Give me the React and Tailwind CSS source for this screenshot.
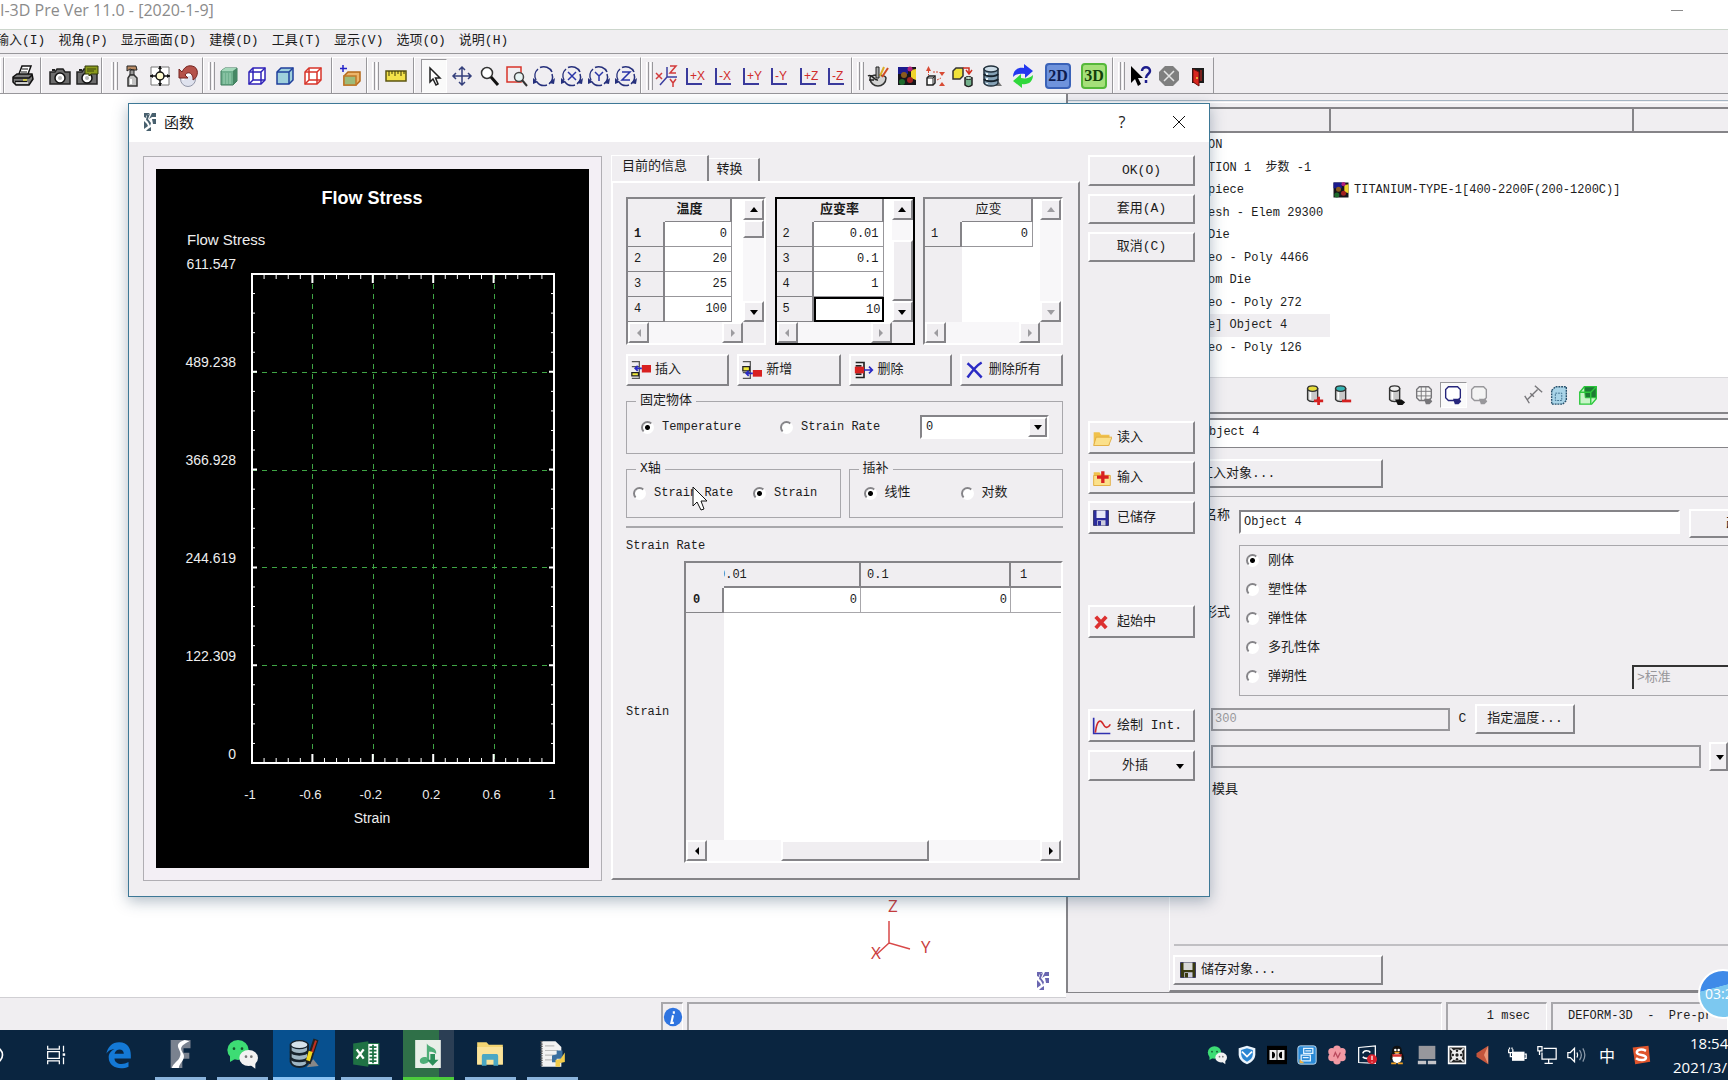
import { useState } from "react";

const raised = "border-2 border-t-white border-l-white border-r-[#858488] border-b-[#858488] bg-[#f0eef1]";
const sunken = "border-2 border-t-[#858488] border-l-[#858488] border-r-white border-b-white";
const mono = "font-['Liberation_Mono','Noto_Sans_CJK_SC',monospace]";

function Svg({ size = "size-6", box = "0 0 24 24", children }) {
  return (
    <svg className={`${size} shrink-0`} viewBox={box} fill="none" aria-hidden="true">
      {children}
    </svg>
  );
}

/* ---------- toolbar icons ---------- */

function Printer() {
  return (
    <Svg>
      <path d="M8 10L11 2H20L17 10" fill="#fff" stroke="#111" strokeWidth="1.5" />
      <path d="M11 5H17M10 8H16" stroke="#111" />
      <path d="M2 13L6 10H21L22 15L18 21H5L2 18Z" fill="#777" stroke="#111" strokeWidth="1.5" />
      <path d="M2 14H18L21 11M4 17.500H16" stroke="#111" strokeWidth="1.500" />
      <path d="M5 19H17" stroke="#eee" strokeWidth="1.500" />
      <path d="M12 16H16" stroke="#e8e03a" strokeWidth="1.500" />
    </Svg>
  );
}

function Camera({ tag }) {
  return (
    <Svg>
      <path d="M2 8H7L9 5H15L17 8H22V20H2Z" fill="#6d6d6d" stroke="#222" strokeWidth="1.500" />
      <path d="M4 5H7V7H4Z" fill="#222" />
      <circle cx="12" cy="14" r="5" fill="#fff" stroke="#111" strokeWidth="1.500" />
      <circle cx="12" cy="14" r="2" fill="#bbb" />
      {tag && <path d="M10 2H23V10H16L14 12V10H10Z" fill="#8a9a1c" stroke="#303808" />}
      {tag && <path d="M12 5H21M12 7H19" stroke="#3a4408" />}
    </Svg>
  );
}

function Spray() {
  return (
    <Svg>
      <path d="M7 2H16L17 6H13L10 5L7 7Z" fill="#b98a63" stroke="#222" />
      <path d="M10 6H14V11H10Z" fill="#999" stroke="#222" />
      <path d="M10 11L8 14V22H17V14L14 11Z" fill="#c4c4c4" stroke="#333" strokeWidth="1.500" />
      <path d="M11 15V20" stroke="#fff" strokeWidth="2" />
    </Svg>
  );
}

function Target() {
  return (
    <Svg>
      <path d="M3 3H21V21H3Z" fill="#fff" stroke="#777" />
      <circle cx="12" cy="12" r="4" fill="#fffbd0" stroke="#111" strokeWidth="1.500" />
      <path d="M12 2V8M12 16V22M2 12H8M16 12H22" stroke="#111" strokeWidth="1.500" />
      <path d="M10 5H14L12 2ZM10 19H14L12 22ZM5 10V14L2 12ZM19 10V14L22 12Z" fill="#111" />
    </Svg>
  );
}

function Undo() {
  return (
    <Svg>
      <circle cx="12" cy="15" r="7.500" fill="#dfe2ee" stroke="#9397a8" />
      <path d="M7 16C8 12 12 10 16 11" stroke="#fff" strokeWidth="2" />
      <path d="M3 5V14H12L9 11C11 8 14 8 16 11C17 13 17 14 17 16C23 13 23 3 16 2C11 1 8 4 6 8Z" fill="#b5524a" stroke="#742420" />
    </Svg>
  );
}

function Cube({ line, front, wire }) {
  return (
    <Svg>
      <path d="M4 8L8 4H20V16L16 20H4Z" fill={front} stroke={line} strokeWidth="1.500" />
      <path d="M4 8H16V20M16 8L20 4" stroke={line} strokeWidth="1.500" />
      {wire && <path d="M8 4V16H20M8 16L4 20" stroke={line} strokeWidth="1.500" />}
    </Svg>
  );
}

function SolidCube() {
  return (
    <Svg>
      <path d="M4 7L8 4H20V17L16 21H4Z" fill="#6fb08e" stroke="#3d7a5a" />
      <path d="M4 7H16L20 4H8Z" fill="#a5d8bb" />
      <path d="M16 7V21L20 17V4Z" fill="#468765" />
      <path d="M7 9V20M10 9V20M13 9V20" stroke="#9fd3b5" />
    </Svg>
  );
}

function BoxPlus() {
  return (
    <Svg>
      <path d="M6 12L10 8H22V17L18 21H6Z" fill="#ecb46a" stroke="#b46818" strokeWidth="1.500" />
      <path d="M6 12H18V21H6Z" fill="#9dbb7a" stroke="#c07a28" strokeWidth="1.500" />
      <path d="M5 1V8M2 4.500H9" stroke="#2222c8" strokeWidth="1.500" />
    </Svg>
  );
}

function Ruler() {
  return (
    <Svg>
      <path d="M2 7H22V17H2Z" fill="#f4e24a" stroke="#5c5510" strokeWidth="1.500" />
      <path d="M5 7V12M8 7V10M11 7V12M14 7V10M17 7V12M20 7V10" stroke="#3b3708" />
    </Svg>
  );
}

function Arrow() {
  return (
    <Svg>
      <path d="M8 4V18L11 15L14 21L16 20L13.500 14H18Z" fill="#fff" stroke="#222" strokeWidth="1.500" />
    </Svg>
  );
}

function Move() {
  return (
    <Svg>
      <path
        d="M12 4V20M4 12H20M9 6L12 3L15 6M9 18L12 21L15 18M6 9L3 12L6 15M18 9L21 12L18 15"
        stroke="#35407c"
        strokeWidth="1.500"
      />
    </Svg>
  );
}

function Zoom() {
  return (
    <Svg>
      <circle cx="10" cy="9" r="5.500" fill="#fff" stroke="#333" strokeWidth="1.500" />
      <path d="M14 13L21 21" stroke="#111" strokeWidth="3" />
    </Svg>
  );
}

function ZoomRect() {
  return (
    <Svg>
      <path d="M2 3H16V18H2Z" stroke="#d8342a" strokeWidth="1.500" />
      <circle cx="14" cy="13" r="4.500" fill="#e8f4f4" stroke="#444" strokeWidth="1.500" />
      <path d="M17 16L22 22" stroke="#333" strokeWidth="2" />
    </Svg>
  );
}

function Rotate({ axis }) {
  return (
    <Svg>
      <path d="M4 16A9 9 0 0 1 6 5M8 3.500A9 9 0 0 1 20 8M20 10A9 9 0 0 1 17 20M15 21A9 9 0 0 1 5 18" stroke="#26307c" strokeWidth="1.500" />
      <path d="M17 19L23 14L22 20ZM1 20V14L6 18Z" fill="#26307c" />
      {axis === "X" && <path d="M8 8L16 16M16 8L8 16" stroke="#2a35a8" strokeWidth="1.500" />}
      {axis === "Y" && <path d="M8 8L12 12L16 8M12 12V17" stroke="#2a35a8" strokeWidth="1.500" />}
      {axis === "Z" && <path d="M8 8H16L8 16H16" stroke="#2a35a8" strokeWidth="1.500" />}
    </Svg>
  );
}

function Axes() {
  return (
    <Svg>
      <path d="M12 3V13L5 21M12 13H22" stroke="#3b3fa0" strokeWidth="1.500" />
      <path d="M1 9L7 15M7 9L1 15M15 2H21L15 9H21M15 15L18 19L21 15M18 19V23" stroke="#d23b3b" strokeWidth="1.500" />
    </Svg>
  );
}

function ViewAxis({ label }) {
  return (
    <Svg>
      <path d="M4 4V20H19" stroke="#3a3a9c" strokeWidth="2" />
      <text x="7" y="16" fontSize="12" fontFamily="Liberation Sans" fill="#d02c2c">
        {label}
      </text>
    </Svg>
  );
}

function Brushes() {
  return (
    <Svg>
      <path d="M4 14C4 10 19 10 20 14C20 19 16 22 12 22C8 22 4 19 4 14Z" fill="#d2d2d2" stroke="#333" strokeWidth="1.500" />
      <path d="M10 3H13V14H10Z" fill="#aaa" stroke="#222" />
      <path d="M16 13L22 4" stroke="#d04a24" strokeWidth="2" />
      <path d="M14 12L18 3" stroke="#dcae28" strokeWidth="2" />
      <path d="M2 12C6 9 8 17 12 16M3 16H8" stroke="#222" strokeWidth="1.500" />
    </Svg>
  );
}

function Material({ size }) {
  return (
    <Svg size={size}>
      <path d="M3 3H21V21H3Z" fill="#17151a" />
      <path d="M3 3H13V10H3Z" fill="#1b1b8e" />
      <path d="M16 6L21 5V16L16 14Z" fill="#f0d42c" />
      <circle cx="15" cy="5" r="2.500" fill="#b0207a" />
      <circle cx="9" cy="11" r="3" fill="#8a5a1c" />
      <circle cx="7" cy="18" r="3" fill="#1d6a2c" />
      <circle cx="15" cy="16" r="3" fill="#a02020" />
    </Svg>
  );
}

function Spread() {
  return (
    <Svg>
      <path d="M4 14L6 12H12V19L10 21H4Z" fill="#fff" stroke="#222" strokeWidth="1.500" />
      <path d="M4 14H10V21M10 14L12 12" stroke="#222" />
      <path d="M3 7L5.500 2L8 7ZM16 8H22L19 12ZM16 22L19 18L22 22Z" fill="#d84a34" />
      <path d="M5.500 7V11M10 8H15M14 16L18 14" stroke="#d84a34" strokeDasharray="2 1" />
    </Svg>
  );
}

function Stacked() {
  return (
    <Svg>
      <path d="M2 7L5 4H12V12L9 15H2Z" fill="#f0e23a" stroke="#333" strokeWidth="1.500" />
      <path d="M14 14H21V21C19 23 16 23 14 21Z" fill="#74b08c" stroke="#222" strokeWidth="1.500" />
      <ellipse cx="17.500" cy="14" rx="3.500" ry="1.500" fill="#bfe0cc" stroke="#222" />
      <path d="M12 4H18V9M15 6L18 10L21 6" stroke="#d03020" strokeWidth="1.500" />
    </Svg>
  );
}

function Database({ size }) {
  return (
    <Svg size={size}>
      <path d="M14 22H22L19 18Z" fill="#777" />
      <path d="M4 5V19C6 23 16 23 18 19V5Z" fill="#86a2b6" stroke="#22303c" strokeWidth="1.500" />
      <ellipse cx="11" cy="5" rx="7" ry="3" fill="#cbdbe6" stroke="#22303c" strokeWidth="1.500" />
      <path d="M4 10C6 13 16 13 18 10M4 15C6 18 16 18 18 15" stroke="#16222c" strokeWidth="2" />
      <path d="M7 9V11M7 14V16M7 19V20" stroke="#e6f0f6" strokeWidth="2" />
    </Svg>
  );
}

function Refresh() {
  return (
    <Svg>
      <path d="M2 13C2 6 7 3 13 4V0L22 7L14 14V10C9 9 5 10 2 13Z" fill="#2338f0" />
      <path d="M22 11C22 18 17 21 11 20V24L2 17L10 10V14C15 15 19 14 22 11Z" fill="#30d83c" />
    </Svg>
  );
}

function Badge({ label, className }) {
  return (
    <span className={`flex h-[26px] w-[26px] items-center justify-center rounded-sm border-2 font-['Liberation_Serif',serif] text-base leading-4 font-bold ${className}`}>
      {label}
    </span>
  );
}

function WhatsThis() {
  return (
    <Svg>
      <path d="M3 2V19L7 15L10 22L13 20L10 14H15Z" fill="#000" />
      <path d="M14 7C14 2 22 2 22 7C22 10 18 10 18 14M18 16V19" stroke="#1c1c8c" strokeWidth="2.500" />
    </Svg>
  );
}

function Stop() {
  return (
    <Svg>
      <path d="M8 2H16L22 8V16L16 22H8L2 16V8Z" fill="#7f7f7f" />
      <path d="M7 7L17 17M17 7L7 17" stroke="#e4e4e4" strokeWidth="1.500" />
    </Svg>
  );
}

function Exit() {
  return (
    <Svg>
      <path d="M6 4H18V19H6Z" fill="#1c1c1c" />
      <path d="M7 5L13 8V22L7 18Z" fill="#d8271f" stroke="#6b0f0b" />
      <path d="M15 6V17" stroke="#d8271f" />
      <path d="M11 13V15" stroke="#f5d040" strokeWidth="1.500" />
    </Svg>
  );
}

/* F shape cut by a white S-curve */
function Logo({ color }) {
  return (
    <svg className="h-5 w-[14px] shrink-0" viewBox="0 0 14 20" fill="none" aria-hidden="true">
      <path d="M1 1H7L3 4V6L1 5Z" fill={color} />
      <path d="M9 1H13V5H9L6 7Z" fill={color} />
      <path d="M4 3L7 2L5 7L8 11L7 14Q5 9 3 8Z" fill={color} />
      <path d="M9 7H13V12H10Z" fill={color} />
      <path d="M1 9L4 12L5 14L1 17Z" fill={color} />
      <path d="M8 15V19H3L5 17Z" fill={color} />
    </svg>
  );
}

/* ---------- small parts ---------- */

function Tri({ dir, dim }) {
  const d = {
    up: "M1 7L5 2L9 7Z",
    down: "M1 3L5 8L9 3Z",
    left: "M7 1L3 5L7 9Z",
    right: "M3 1L7 5L3 9Z",
  }[dir];
  return (
    <Svg size="size-[10px]" box="0 0 10 10">
      <path d={d} fill={dim ? "#9d9ca0" : "#000"} />
    </Svg>
  );
}

function ScrollButton({ dir, dim }) {
  return (
    <button aria-label={`scroll ${dir}`} className={`flex size-[21px] shrink-0 items-center justify-center ${raised}`}>
      <Tri dir={dir} dim={dim} />
    </button>
  );
}

function Radio({ name, label, checked, className = "" }) {
  return (
    <label className={`flex items-center gap-2 whitespace-nowrap ${className}`}>
      <input
        type="radio"
        name={name}
        defaultChecked={checked}
        className="size-[13px] shrink-0 appearance-none rounded-full border-2 border-t-[#858488] border-r-white border-b-white border-l-[#858488] bg-white checked:bg-[radial-gradient(circle,#000_2px,#fff_3px)]"
      />
      {label}
    </label>
  );
}

function ToolGroup({ width, handle, children }) {
  return (
    <div className={`flex h-9 shrink-0 items-center border-t border-r border-l border-t-white border-r-[#98979b] border-l-white ${width}`}>
      {handle && (
        <div className="ml-1 flex h-7 shrink-0 gap-px">
          <span className="w-[3px] border-r border-l border-r-[#98979b] border-l-white" />
          <span className="w-[3px] border-r border-l border-r-[#98979b] border-l-white" />
        </div>
      )}
      <div className="flex flex-1 items-center justify-around">{children}</div>
    </div>
  );
}

function Tool({ label, pressed, children }) {
  return (
    <button
      aria-label={label}
      className={pressed ? "border border-t-[#98979b] border-r-white border-b-white border-l-[#98979b] bg-[#fafafa] py-1" : "py-1"}
    >
      {children}
    </button>
  );
}

function Toolbar() {
  return (
    <div className="flex h-10 shrink-0 items-end overflow-hidden border-b border-[#98979b] bg-[#f0eef1]">
      <ToolGroup width="w-1" />
      <ToolGroup width="w-[37px]">
        <Tool label="print"><Printer /></Tool>
      </ToolGroup>
      <ToolGroup width="w-[61px] pl-1">
        <Tool label="capture"><Camera /></Tool>
        <Tool label="capture area"><Camera tag /></Tool>
      </ToolGroup>
      <ToolGroup width="w-[101px] pl-1" handle>
        <Tool label="spray"><Spray /></Tool>
        <Tool label="center"><Target /></Tool>
        <Tool label="undo"><Undo /></Tool>
      </ToolGroup>
      <ToolGroup width="w-[129px] pr-1" handle>
        <Tool label="shaded"><SolidCube /></Tool>
        <Tool label="wireframe"><Cube line="#2f22b8" front="#fff" wire /></Tool>
        <Tool label="hidden line"><Cube line="#1f3f9c" front="#9fd0dc" /></Tool>
        <Tool label="outline"><Cube line="#d8342a" front="#fff" wire /></Tool>
      </ToolGroup>
      <ToolGroup width="w-[35px]">
        <Tool label="add box"><BoxPlus /></Tool>
      </ToolGroup>
      <ToolGroup width="w-[47px]" handle>
        <Tool label="measure"><Ruler /></Tool>
      </ToolGroup>
      <ToolGroup width="w-[227px] pl-1">
        <Tool label="select" pressed><Arrow /></Tool>
        <Tool label="pan"><Move /></Tool>
        <Tool label="zoom"><Zoom /></Tool>
        <Tool label="zoom area"><ZoomRect /></Tool>
        <Tool label="rotate"><Rotate /></Tool>
        <Tool label="rotate x"><Rotate axis="X" /></Tool>
        <Tool label="rotate y"><Rotate axis="Y" /></Tool>
        <Tool label="rotate z"><Rotate axis="Z" /></Tool>
      </ToolGroup>
      <ToolGroup width="w-[211px]" handle>
        <Tool label="isometric"><Axes /></Tool>
        {["+X", "-X", "+Y", "-Y", "+Z", "-Z"].map((axis) => (
          <Tool key={axis} label={`view ${axis}`}><ViewAxis label={axis} /></Tool>
        ))}
      </ToolGroup>
      <ToolGroup width="w-[261px]" handle>
        <div className="flex flex-1 justify-around">
          <Tool label="simulation"><Brushes /></Tool>
          <Tool label="material"><Material size="size-6" /></Tool>
          <Tool label="positioning"><Spread /></Tool>
          <Tool label="relation"><Stacked /></Tool>
          <Tool label="database"><Database size="size-6" /></Tool>
        </div>
        <div className="flex w-[106px] items-center justify-around">
          <Tool label="refresh"><Refresh /></Tool>
          <Tool label="2D mode"><Badge label="2D" className="border-[#3a62b8] bg-[#6f93dc] text-[#0d1c50]" /></Tool>
          <Tool label="3D mode"><Badge label="3D" className="border-[#55b83a] bg-[#a5e07a] text-[#12400a]" /></Tool>
        </div>
      </ToolGroup>
      <ToolGroup width="w-[101px]" handle>
        <Tool label="what's this"><WhatsThis /></Tool>
        <Tool label="stop"><Stop /></Tool>
        <Tool label="exit"><Exit /></Tool>
      </ToolGroup>
    </div>
  );
}

/* ---------- function dialog ---------- */

const xTicks = ["-1", "-0.6", "-0.2", "0.2", "0.6", "1"];
const yTicks = ["611.547", "489.238", "366.928", "244.619", "122.309", "0"];

function FlowStressChart() {
  const left = 96;
  const right = 398;
  const top = 105;
  const bottom = 594;
  const stepX = (right - left) / 5;
  const stepY = (bottom - top) / 5;
  const minor = Array.from({ length: 26 }, (_, i) => i);

  return (
    <svg className="block h-full w-full bg-black" viewBox="0 0 433 699" fontFamily="Liberation Sans, sans-serif" fontSize="13" fill="#eee">
      <text x="216" y="35" fontSize="18" fontWeight="bold" textAnchor="middle" fill="#fff">
        Flow Stress
      </text>
      <text x="31" y="76" fontSize="15">Flow Stress</text>

      {[1, 2, 3, 4].map((i) => (
        <g key={i} stroke="#3fa545" strokeDasharray="5 5">
          <path d={`M${Math.round(left + i * stepX)}.5 ${top}V${bottom}`} />
          <path d={`M${left} ${Math.round(top + i * stepY)}.5H${right}`} />
        </g>
      ))}

      {/* ticks on all four sides, every fifth one is long */}
      {minor.map((i) => {
        const x = left + (i * stepX) / 5;
        const y = top + (i * stepY) / 5;
        const major = i % 5 === 0;
        return (
          <g key={i} stroke="#fff" strokeWidth={major ? 2 : 1}>
            <path d={`M${x} ${top}v${major ? 9 : 5}M${x} ${bottom}v${major ? -9 : -5}`} />
            <path d={`M${left} ${y}h${major ? 5 : 3}M${right} ${y}h${major ? -5 : -3}`} />
          </g>
        );
      })}
      <rect x={left} y={top} width={right - left} height={bottom - top} fill="none" stroke="#fff" strokeWidth="2" />

      {yTicks.map((tick, i) => (
        <text key={tick} x="80" y={100 + i * 98} fontSize="14" textAnchor="end">{tick}</text>
      ))}
      {xTicks.map((tick, i) => (
        <text key={tick} x={left - 2 + i * stepX} y="630" textAnchor="middle">{tick}</text>
      ))}
      <text x="216" y="654" fontSize="14" textAnchor="middle">Strain</text>
    </svg>
  );
}

function ValueGrid({ title, rows, bold, active, thumb, dim, width }) {
  return (
    <div className={`flex h-[148px] w-[140px] flex-col ${active ? "border-2 border-black" : sunken}`}>
      <div className="flex h-[123px] overflow-hidden bg-white">
        <table className={`h-full table-fixed border-separate border-spacing-0 text-xs ${width}`}>
          <thead>
            <tr className="h-[23px]">
              <th className="w-[37px] bg-[#f0eef1]" />
              <th className={`border-r-2 border-b border-[#858488] bg-[#f0eef1] pr-4 text-[13px] leading-5 ${bold ? "font-bold" : "font-normal"}`}>
                {title}
              </th>
            </tr>
          </thead>
          <tbody>
            {rows.map(([n, value], i) => (
              <tr key={n} className="h-[25px]">
                <th className={`border-r-2 border-b border-[#858488] bg-[#f0eef1] pl-[6px] text-left ${n === 1 && bold ? "font-bold" : "font-normal"}`}>
                  {n}
                </th>
                <td
                  className={
                    active && i === rows.length - 1
                      ? "border-2 border-black bg-white pr-px text-right"
                      : "border-r border-b border-[#98979b] bg-white pr-1 text-right"
                  }
                >
                  {value}
                </td>
              </tr>
            ))}
            {rows.length < 4 && (
              <tr>
                <td className="bg-[#f0eef1]" />
                <td />
              </tr>
            )}
          </tbody>
        </table>
        <div className="ml-auto flex w-[21px] flex-col bg-[#f8f7f9]">
          <ScrollButton dir="up" dim={dim} />
          {thumb && <div className={`${thumb} ${raised}`} />}
          <div className="mt-auto">
            <ScrollButton dir="down" dim={dim} />
          </div>
        </div>
      </div>
      <div className="flex flex-1 bg-[#f0eef1]">
        <div className="flex w-[115px] justify-between bg-[#f8f7f9]">
          <ScrollButton dir="left" dim />
          <ScrollButton dir="right" dim />
        </div>
      </div>
    </div>
  );
}

function RowIcon({ kind }) {
  if (kind === "clear") {
    return (
      <Svg size="size-5">
        <path d="M3 4C9 9 14 15 20 21M20 3C13 7 8 14 3 21" stroke="#2a2ac4" strokeWidth="3" />
      </Svg>
    );
  }
  if (kind === "delete") {
    return (
      <Svg size="size-5">
        <path d="M2 3H12V21H2M2 7H9M2 17H9" stroke="#222" strokeWidth="2" />
        <path d="M1 8H12V16H1Z" fill="#d82020" />
        <path d="M12 12H22M18 8L22 12L18 16" stroke="#2a2ac4" strokeWidth="2" />
      </Svg>
    );
  }
  const add = kind === "add";
  return (
    <Svg size="size-5">
      <path d="M1 2H10V22H1M1 8H10M1 15H10" stroke="#555" strokeWidth="1.500" />
      <path d={add ? "M1 8H9V13H1Z" : "M1 15H9V19H1Z"} fill="#f0e83a" stroke="#222" strokeWidth="1.500" />
      <path d={add ? "M13 12H24V20H13Z" : "M13 6H24V15H13Z"} fill="#d82020" />
      <path d={add ? "M13 16H5M8 13L5 16L8 19" : "M13 10H5M8 7L5 10L8 13"} stroke="#2a2ac4" strokeWidth="2" />
    </Svg>
  );
}

const rowActions = [
  ["insert", "插入"],
  ["add", "新增"],
  ["delete", "删除"],
  ["clear", "删除所有"],
];

function Group({ title, className, children }) {
  return (
    <fieldset className={`border border-[#a8a7ab] ${className}`}>
      <legend className="ml-[9px] px-1 leading-[14px]">{title}</legend>
      {children}
    </fieldset>
  );
}

function CurrentInfo() {
  return (
    <div className={`flex flex-1 flex-col pt-[14px] pr-[15px] pb-[15px] pl-[13px] ${raised}`}>
      <div className="flex justify-between">
        <ValueGrid title="温度" bold width="w-[104px]" thumb="h-[18px]" rows={[[1, "0"], [2, "20"], [3, "25"], [4, "100"]]} />
        <ValueGrid title="应变率" bold active width="w-[107px]" thumb="mt-5 h-[62px]" rows={[[2, "0.01"], [3, "0.1"], [4, "1"], [5, "10"]]} />
        <ValueGrid title="应变" dim width="w-[108px]" rows={[[1, "0"]]} />
      </div>

      <div className="mt-[9px] flex gap-2">
        {rowActions.map(([kind, label]) => (
          <button key={kind} className={`flex h-8 flex-1 items-center gap-1 pl-[3px] whitespace-nowrap ${raised}`}>
            <RowIcon kind={kind} />
            {label}
          </button>
        ))}
      </div>

      <Group title="固定物体" className="mt-2 h-[60px] text-[13px]">
        <div className="flex h-[38px] items-center pl-[14px] text-xs">
          <Radio name="fixed" label="Temperature" checked className="w-[139px]" />
          <Radio name="fixed" label="Strain Rate" />
          <div className="relative mr-[13px] ml-auto">
            <select aria-label="fixed value" className={`block h-6 w-[129px] appearance-none bg-white pl-1 ${sunken}`}>
              <option>0</option>
            </select>
            <span className={`pointer-events-none absolute top-[2px] right-[2px] flex h-5 w-[19px] items-center justify-center ${raised}`}>
              <Tri dir="down" />
            </span>
          </div>
        </div>
      </Group>

      <div className="mt-2 flex gap-2">
        <Group title="X轴" className="h-[56px] flex-1">
          <div className="flex h-[34px] items-center pl-[6px] text-xs">
            <Radio name="xaxis" label="Strain Rate" className="w-[120px]" />
            <Radio name="xaxis" label="Strain" checked />
          </div>
        </Group>
        <Group title="插补" className="h-[56px] flex-1">
          <div className="flex h-[34px] items-center pl-[14px]">
            <Radio name="interp" label="线性" checked className="w-[97px]" />
            <Radio name="interp" label="对数" />
          </div>
        </Group>
      </div>

      <hr className="mt-2 border-t-2 border-[#a8a7ab]" />
      <p className="mt-[10px] text-xs leading-4">Strain Rate</p>

      <div className="mt-[7px] flex flex-1 items-stretch">
        <span className="w-[58px] self-center text-xs">Strain</span>
        <div className={`flex flex-1 flex-col overflow-hidden bg-white ${sunken}`}>
          <table className="w-full flex-1 table-fixed border-separate border-spacing-0 text-xs">
            <thead>
              <tr className="h-[25px] bg-[#f0eef1] text-left">
                <th className="w-[38px]" />
                <th className="w-[137px] overflow-hidden border-r-2 border-b-2 border-[#858488] font-normal">
                  <span className="-ml-[6px]">0.01</span>
                </th>
                <th className="w-[150px] border-r-2 border-b-2 border-[#858488] pl-[6px] font-normal">0.1</th>
                <th className="border-b-2 border-[#858488] pl-[9px] font-normal">1</th>
              </tr>
            </thead>
            <tbody>
              <tr className="h-[25px] text-right">
                <th className="border-r-2 border-b border-[#858488] bg-[#f0eef1] pl-[7px] text-left">0</th>
                <td className="border-r border-b border-[#a8a7ab] pr-[3px]">0</td>
                <td className="border-r border-b border-[#a8a7ab] pr-[3px]">0</td>
                <td className="border-b border-[#a8a7ab]" />
              </tr>
              <tr className="h-[224px]">
                <td className="bg-[#f0eef1]" />
                <td colSpan="3" />
              </tr>
            </tbody>
          </table>
          <div className="flex h-[21px] shrink-0 bg-[#f8f7f9]">
            <ScrollButton dir="left" />
            <div className={`ml-[74px] w-[148px] ${raised}`} />
            <div className="ml-auto">
              <ScrollButton dir="right" />
            </div>
          </div>
        </div>
      </div>
    </div>
  );
}

function Folder({ plus }) {
  return (
    <Svg size="size-5">
      <path d="M2 5H9L11 8H21V21H2Z" fill="#f0c14c" />
      <path d={plus ? "M2 9H22V21H2Z" : "M5 11H24L20 21H2Z"} fill="#fbe08a" stroke="#e0a838" />
      {plus && <path d="M13 4V18M6 11H20" stroke="#d82020" strokeWidth="4" />}
    </Svg>
  );
}

function Floppy({ body, paper }) {
  return (
    <Svg size="size-[18px]">
      <path d="M2 2H22V22H2Z" fill={body} stroke="#222258" />
      <path d="M6 2H18V12H6Z" fill={paper} />
      <path d="M7 15H18V22H7Z" fill="#ccd" />
      <path d="M8 16H12V22H8Z" fill={body} />
    </Svg>
  );
}

function RedCross() {
  return (
    <Svg size="size-[18px]">
      <path d="M5 5L19 20M19 5L5 20" stroke="#dc3030" strokeWidth="5" />
    </Svg>
  );
}

function PlotIcon() {
  return (
    <Svg size="size-5">
      <path d="M2 2V21H22" stroke="#3030b0" strokeWidth="2" />
      <path d="M4 20C6 4 10 4 13 9C16 15 19 15 22 10" stroke="#d02a2a" strokeWidth="2" />
    </Svg>
  );
}

function SideButton({ icon, label, className }) {
  return (
    <button className={`flex shrink-0 items-center whitespace-nowrap ${icon ? "pl-[2px]" : "justify-center"} ${raised} ${className}`}>
      {icon && <span className="flex w-[25px] justify-start">{icon}</span>}
      {label}
    </button>
  );
}

function FunctionDialog() {
  const [tab, setTab] = useState("info");

  return (
    <section
      role="dialog"
      aria-label="函数"
      className="absolute top-[103px] left-[128px] flex h-[794px] w-[1082px] flex-col border border-[#3d7896] bg-[#f0eef1] shadow-[0_4px_14px_rgba(30,60,90,0.35)]"
    >
      <header className="flex h-[38px] shrink-0 items-center bg-white pb-[2px] pl-[14px]">
        <Logo color="#48606e" />
        <h1 className="ml-[7px] font-['Noto_Sans_CJK_SC',sans-serif] text-[15px] leading-5">函数</h1>
        <button className="ml-auto w-[58px] font-['Open_Sans',sans-serif] text-base">?</button>
        <button aria-label="close" className="flex w-[58px] justify-center pr-[2px]">
          <Svg size="size-[14px]" box="0 0 14 14">
            <path d="M1 1L13 13M13 1L1 13" stroke="#111" />
          </Svg>
        </button>
      </header>

      <div className="flex flex-1 pt-[14px] pr-[14px] pb-4 pl-[14px]">
        <div className="w-[459px] border border-[#b0aeb3] bg-[#f3eff5] p-3">
          <FlowStressChart />
        </div>

        <div className="-mt-px mb-px ml-[9px] flex w-[469px] flex-col">
          <div role="tablist" className="flex items-end">
            <button
              role="tab"
              aria-selected={tab === "info"}
              onClick={() => setTab("info")}
              className="h-[26px] w-[98px] border-t border-r-2 border-l border-t-white border-r-[#858488] border-l-white pb-1 pl-[10px] text-left leading-4"
            >
              目前的信息
            </button>
            <button
              role="tab"
              aria-selected={tab === "convert"}
              onClick={() => setTab("convert")}
              className="h-[23px] w-[51px] border-t border-r-2 border-t-white border-r-[#858488] pr-2 leading-4"
            >
              转换
            </button>
          </div>
          <CurrentInfo />
        </div>

        <div className="-mt-px ml-2 flex flex-1 flex-col">
          <SideButton label="OK(O)" className="h-[31px] border-t-[#858488] border-l-[#858488]" />
          <SideButton label="套用(A)" className="mt-2 h-[30px]" />
          <SideButton label="取消(C)" className="mt-2 h-[30px]" />
          <SideButton icon={<Folder />} label="读入" className="mt-[159px] h-[33px]" />
          <SideButton icon={<Folder plus />} label="输入" className="mt-[7px] h-[33px]" />
          <SideButton icon={<Floppy body="#2c2c9c" paper="#e8e8f8" />} label="已储存" className="mt-[7px] h-[33px]" />
          <SideButton icon={<RedCross />} label="起始中" className="mt-[71px] h-[33px]" />
          <SideButton icon={<PlotIcon />} label="绘制 Int." className="mt-[71px] h-[33px]" />
          <button className={`mt-2 flex h-[31px] items-center justify-end gap-[27px] pr-2 ${raised}`}>
            外插
            <Tri dir="down" />
          </button>
        </div>
      </div>
    </section>
  );
}

/* ---------- object panel ---------- */

const treeRows = [
  "ON",
  "TION 1  步数 -1",
  "piece",
  "esh - Elem 29300",
  "Die",
  "eo - Poly 4466",
  "om Die",
  "eo - Poly 272",
  "e] Object 4",
  "eo - Poly 126",
];

function Cylinder({ top, sign, eye }) {
  return (
    <Svg size="size-[22px]">
      <path d="M5 5V17C7 20 14 20 16 17V5Z" fill="#c8c8c8" stroke="#333" strokeWidth="1.500" />
      <path d="M8 8V17" stroke="#fff" strokeWidth="2" />
      <ellipse cx="10.500" cy="5" rx="5.500" ry="3" fill={top} stroke="#333" strokeWidth="1.500" />
      {sign && <path d={sign === "+" ? "M17 14V23M12 18.500H22" : "M12 18.500H22"} stroke="#d42020" strokeWidth="3" />}
      {eye && <path d="M11 17H18L22 20L19 23H14Z" fill="#111" />}
    </Svg>
  );
}

function ViewMode({ color, fill, grid }) {
  return (
    <Svg size="size-[22px]">
      <path d="M7 3H17L20 6V15L17 18H7L4 15V6Z" fill={fill} stroke={color} strokeWidth="1.500" />
      {grid && <path d="M9 3V18M14 3V18M4 8H20M4 13H20" stroke={color} />}
      <path d="M12 16H19L21 19L18 22H14Z" fill={color} />
    </Svg>
  );
}

function ObjectTools() {
  return (
    <div className="flex h-[34px] shrink-0 items-center pb-px pl-[235px]">
      <button aria-label="add object" className="w-7"><Cylinder top="#e6dc3a" sign="+" /></button>
      <button aria-label="remove object" className="w-7"><Cylinder top="#34b4b4" sign="-" /></button>
      <div className="ml-[26px] flex items-center">
        <button aria-label="show object" className="w-7"><Cylinder top="#eee" eye /></button>
        <button aria-label="show mesh" className="w-[27px]"><ViewMode color="#77767a" fill="#f4f4f4" grid /></button>
        <button aria-label="show outline" className="w-[27px] border border-t-[#98979b] border-r-white border-b-white border-l-[#98979b] bg-[#fafafa] py-px pl-px">
          <ViewMode color="#26267c" fill="#fff" />
        </button>
        <button aria-label="hide" className="pl-px"><ViewMode color="#98979b" fill="#f4f4f4" /></button>
      </div>
      <div className="ml-8 flex gap-1">
        <button aria-label="edges">
          <Svg size="size-[22px]">
            <path d="M3 13L8 21M14 2L22 9M6 17L17 6M9 10L13 14" stroke="#77767a" strokeWidth="1.500" />
          </Svg>
        </button>
        <button aria-label="region">
          <Svg size="size-[22px]">
            <path d="M4 7L8 3H20V18L16 22H4Z" fill="#a9d4e8" stroke="#27506c" strokeWidth="1.500" strokeDasharray="2 1" />
            <path d="M8 10H15V18H8Z" stroke="#3b6c8c" strokeDasharray="2 1" />
          </Svg>
        </button>
        <button aria-label="solid view" className="pl-[3px]">
          <Svg size="size-[22px]">
            <path d="M3 9L8 3H21V16L16 22H3Z" fill="#c8f4c8" stroke="#2cc83c" strokeWidth="1.500" />
            <path d="M8 3H21V15H9Z" fill="#1d7a34" stroke="#2cc83c" />
            <path d="M3 9H15V22M15 9L21 3" stroke="#2cc83c" strokeWidth="1.500" />
          </Svg>
        </button>
      </div>
    </div>
  );
}

function ObjectPanel() {
  return (
    <aside className="mb-[5px] flex w-[662px] shrink-0 flex-col overflow-hidden border-b border-l-2 border-[#858488] bg-[#f0eef1] text-[13px]">
      <div className="h-[13px] shrink-0 pt-[6px]">
        <div className="h-[3px] border-t border-b border-t-[#a4b4c2] border-b-white" />
      </div>

      <div className="flex h-[26px] shrink-0 border-t-2 border-b-2 border-[#858488]">
        <span className="w-[263px] border-r-2 border-[#858488]" />
        <span className="w-[303px] border-r-2 border-[#858488]" />
      </div>
      <div className="h-[245px] shrink-0 border-b border-[#d8d7da] bg-white pt-px">
        <ul className="grid h-[225px] grid-rows-10 text-xs">
          {treeRows.map((row, i) => (
            <li key={row} className="flex items-center whitespace-pre">
              <span className={`flex h-full w-[262px] shrink-0 items-center pl-[140px] ${i === 8 ? "bg-[#f0eef1]" : ""}`}>{row}</span>
              {i === 2 && (
                <span className="flex items-center gap-[3px] pl-px">
                  <Material size="size-5" />
                  TITANIUM-TYPE-1[400-2200F(200-1200C)]
                </span>
              )}
            </li>
          ))}
        </ul>
      </div>

      <ObjectTools />

      <div className="h-[6px] shrink-0 border-t-2 border-[#858488]" />
      <div className="flex h-[30px] shrink-0 items-center border-t-2 border-b border-[#858488] bg-white pb-1 pl-[141px] text-xs">
        bject 4
      </div>

      <div className="mt-[6px] ml-[101px] flex flex-1 flex-col border-b-2 border-l border-b-[#858488] border-l-white">
        <button className={`mt-[5px] ml-[3px] h-[29px] w-[210px] shrink-0 pl-[25px] text-left ${raised}`}>汇入对象...</button>
        <hr className="mt-2 border-[#a8a7ab]" />

        <div className="mt-[13px] flex shrink-0 items-start">
          <label htmlFor="object-name" className="w-[69px] shrink-0 pr-[9px] text-right leading-3">名称</label>
          <input
            id="object-name"
            defaultValue="Object 4"
            className={`h-6 w-[441px] shrink-0 bg-white pl-[3px] text-xs ${sunken}`}
          />
          <button className={`-mt-px ml-[9px] h-[29px] w-[100px] shrink-0 ${raised}`}>改变</button>
        </div>

        <div className="mt-[7px] flex shrink-0 items-center">
          <span className="w-[69px] shrink-0 pr-[9px] pb-4 text-right">形式</span>
          <div className="flex h-[151px] w-[560px] shrink-0 border border-[#a8a7ab] pl-[6px]">
            <div className="grid h-[145px] w-[386px] grid-rows-5">
              <Radio name="type" label="刚体" checked className="gap-[9px]" />
              <Radio name="type" label="塑性体" className="gap-[9px]" />
              <Radio name="type" label="弹性体" className="gap-[9px]" />
              <Radio name="type" label="多孔性体" className="gap-[9px]" />
              <Radio name="type" label="弹朔性" className="gap-[9px]" />
            </div>
            <select
              aria-label="model"
              disabled
              className="mb-[6px] h-6 w-[150px] appearance-none self-end border-t-2 border-l-2 border-[#333] pl-[3px] text-[#98979b]"
            >
              <option>&gt;标准</option>
            </select>
          </div>
        </div>

        <div className="mt-2 ml-[41px] flex shrink-0 items-center">
          <input aria-label="temperature" disabled defaultValue="300" className="h-[23px] w-[239px] border-2 border-[#98979b] pl-[2px] text-xs text-[#98979b]" />
          <span className="w-[25px] text-center">C</span>
          <button className={`h-[30px] w-[100px] ${raised}`}>指定温度...</button>
        </div>
        <div className="mt-2 ml-[41px] flex shrink-0 items-center">
          <input aria-label="material" className="h-[23px] w-[490px] shrink-0 border-2 border-[#98979b]" />
          <button aria-label="open material menu" className={`ml-2 flex h-[29px] w-[22px] items-center pl-1 ${raised}`}>
            <Tri dir="down" />
          </button>
        </div>
        <p className="mt-[9px] ml-[42px]">模具</p>

        <hr className="mt-auto ml-1 border-t-2 border-[#c0bfc3]" />
        <button className={`mt-[9px] mb-[5px] ml-[3px] flex h-[30px] w-[210px] shrink-0 items-center gap-1 pl-1 ${raised}`}>
          <Floppy body="#3a3a10" paper="#d8d8d8" />
          储存对象...
        </button>
      </div>
    </aside>
  );
}

function Viewport() {
  return (
    <main className="relative flex min-w-0 flex-1 flex-col border-b border-[#d0cfd3] bg-white">
      <svg className="absolute right-[126px] bottom-[22px] h-20 w-[70px]" viewBox="0 0 70 80" fill="none">
        <path d="M19 26V48L40 54M19 48L7 59" stroke="#d84848" strokeWidth="1.500" />
        <g fill="#c83c3c" fontFamily="Open Sans, sans-serif" fontSize="17">
          <text x="18" y="17">Z</text>
          <text x="1" y="64">X</text>
          <text x="51" y="58">Y</text>
        </g>
      </svg>
      <div className="mt-auto mr-4 mb-[6px] self-end">
        <Logo color="#6a66b0" />
      </div>
    </main>
  );
}

/* ---------- windows taskbar ---------- */

function TaskView() {
  return (
    <Svg size="size-5">
      <path d="M2 1V5H16V1M2 23V19H16V23M2 8H16V16H2ZM21 1V8M21 15V23" stroke="#fff" strokeWidth="1.500" />
      <path d="M20 10H23V13H20Z" fill="#fff" />
    </Svg>
  );
}

function Edge() {
  return (
    <Svg size="size-7">
      <path d="M2 11C3 5 7 1 13 1C20 1 23 6 23 12V15H9C9 20 16 21 21 18V22C14 25 4 23 4 14C4 11 6 8 9 7C5 7 3 9 2 11ZM9 11H17C17 6 10 6 9 11Z" fill="#1479d6" fillRule="evenodd" />
    </Svg>
  );
}

function DeformIcon() {
  return (
    <Svg size="size-7">
      <path d="M4 0H21V7H15V11H20V16H14V24H4Z" fill="#7a828f" />
      <path d="M16 0C4 4 15 9 12 14C11 18 6 20 5 24H11C11 20 17 17 15 12C13 8 10 6 20 1Z" fill="#fff" />
    </Svg>
  );
}

function WeChat({ size }) {
  return (
    <Svg size={size}>
      <ellipse cx="9" cy="9" rx="8" ry="7.500" fill="#3ddc74" />
      <path d="M3 13L3 18L8 15Z" fill="#3ddc74" />
      <circle cx="6" cy="8" r="1" fill="#14542c" />
      <circle cx="12" cy="8" r="1" fill="#14542c" />
      <ellipse cx="17" cy="15" rx="7" ry="6" fill="#f2f2f2" />
      <path d="M18 20L22 23L22 18Z" fill="#f2f2f2" />
      <circle cx="15" cy="14" r="1" fill="#777" />
      <circle cx="19" cy="14" r="1" fill="#777" />
    </Svg>
  );
}

function PreIcon() {
  return (
    <Svg size="size-8">
      <path d="M14 22L23 21L19 16Z" fill="#888" />
      <path d="M2 5V18C4 23 13 23 15 18V5Z" fill="#9fb6c4" stroke="#16222c" strokeWidth="1.500" />
      <ellipse cx="8.500" cy="5" rx="6.500" ry="3" fill="#d6e2ea" stroke="#16222c" />
      <path d="M2 10C4 13 13 13 15 10M2 15C4 18 13 18 15 15" stroke="#16222c" strokeWidth="2" />
      <path d="M21 1L15 19" stroke="#222" strokeWidth="4" />
      <path d="M21 2L18 11" stroke="#c03020" strokeWidth="1.500" />
      <path d="M17 10L15 17" stroke="#f0d820" strokeWidth="3" />
    </Svg>
  );
}

function Excel() {
  return (
    <Svg size="size-7">
      <path d="M12 3H23V21H12Z" fill="#fff" stroke="#1f7244" />
      <path d="M15 6H21M15 9H21M15 12H21M15 15H21M15 18H21M18 4V20" stroke="#1f7244" strokeWidth="1.500" />
      <path d="M1 3L14 1V23L1 21Z" fill="#1f7244" />
      <path d="M4 8L10 16M10 8L4 16" stroke="#fff" strokeWidth="2" />
    </Svg>
  );
}

function MusicDoc() {
  return (
    <Svg size="size-7">
      <path d="M1 0H23V24H1Z" fill="#e9efe9" />
      <path d="M11 3C13 7 20 6 19 12C17 10 14 10 13 10V17C13 21 5 22 5 18C5 15 9 14 11 15Z" fill="#4fae78" />
      <path d="M14 12H18V17H21L16 22L11 17H14Z" fill="#2d8f5a" />
    </Svg>
  );
}

function Explorer() {
  return (
    <Svg size="size-7">
      <path d="M1 2H9L11 4H23V21H1Z" fill="#f3d572" />
      <path d="M1 6H23V21H1Z" fill="#fae39a" />
      <path d="M5 22V14C5 12 6 12 7 12H17C18 12 19 12 19 14V22H15V17H9V22Z" fill="#4aa7c4" />
    </Svg>
  );
}

function PythonDoc() {
  return (
    <Svg size="size-7">
      <path d="M3 1H15L20 6V23H3Z" fill="#f2f2f2" />
      <path d="M6 5H14M6 9H17M6 13H14M6 17H12" stroke="#bbb" />
      <path d="M3 1V23" stroke="#555" strokeDasharray="1 1" strokeWidth="2" />
      <path d="M17 10H20V15H15V18H13V14L17 13Z" fill="#3b6fa0" stroke="#3b6fa0" strokeWidth="2" />
      <path d="M22 14V18L18 19V22H16V18L20 17Z" fill="#f2cc4a" stroke="#f2cc4a" strokeWidth="2" />
    </Svg>
  );
}

const taskButtons = [
  { name: "Task view", icon: <TaskView /> },
  { name: "Edge", icon: <Edge /> },
  { name: "DEFORM", icon: <DeformIcon />, open: true },
  { name: "WeChat", icon: <WeChat size="size-8" />, open: true },
  { name: "DEFORM-3D Pre", icon: <PreIcon />, active: true },
  { name: "Excel", icon: <Excel />, open: true },
  { name: "Recorder", icon: <MusicDoc />, progress: true },
  { name: "Explorer", icon: <Explorer />, open: true },
  { name: "Python", icon: <PythonDoc />, open: true },
];

function TrayIcons() {
  return (
    <div className="flex items-center">
      <span className="flex w-[30px] justify-center"><WeChat size="size-5" /></span>
      <span className="flex w-[30px] justify-center">
        <Svg size="size-5">
          <path d="M12 1L22 4V11C22 17 17 21 12 23C7 21 2 17 2 11V4Z" fill="#eaf4fc" />
          <path d="M12 4L19 6V11C19 15 16 18 12 20C8 18 5 15 5 11V6Z" fill="#2a86d2" />
          <path d="M6 8L12 14L18 8" stroke="#fff" strokeWidth="2" />
        </Svg>
      </span>
      <span className="flex w-[30px] justify-center">
        <Svg size="size-5">
          <path d="M0 1H24V23H0Z" fill="#000" />
          <path d="M3 6H21V18H3Z" fill="#eee" />
          <path d="M6 8C11 8 11 16 6 16ZM18 8C13 8 13 16 18 16Z" fill="#000" />
          <path d="M12 6V18" stroke="#000" />
        </Svg>
      </span>
      <span className="flex w-[30px] justify-center">
        <Svg size="size-5">
          <rect x="1" y="1" width="22" height="22" rx="3" fill="#2b8ad6" stroke="#d8ecfa" />
          <path d="M8 4H19V10H8ZM5 12H16V19H5ZM10 7H17M7 15H14" stroke="#e4f4ff" strokeWidth="1.500" />
          <path d="M3 17L9 22H3Z" fill="#f0b040" />
        </Svg>
      </span>
      <span className="flex w-[30px] justify-center">
        <Svg size="size-5">
          {[[12, 5], [18, 8], [18, 15], [12, 19], [6, 15], [6, 8]].map(([cx, cy]) => (
            <circle key={`${cx}-${cy}`} cx={cx} cy={cy} r="4.500" fill="#f29aa4" />
          ))}
          <circle cx="12" cy="12" r="5" fill="#f29aa4" />
          <path d="M8 14L10 9L13 15L16 9" stroke="#b8485c" strokeWidth="1.500" />
        </Svg>
      </span>
      <span className="flex w-[30px] justify-center">
        <Svg size="size-5">
          <path d="M2 3L22 1V22L2 21Z" stroke="#fff" strokeWidth="1.500" />
          <path d="M7 10C8 6 14 6 16 9M16 13C15 17 9 17 7 14" stroke="#fff" strokeWidth="2" />
          <circle cx="18" cy="17" r="6" fill="#d8202c" />
          <path d="M18 13V18M18 20V21" stroke="#fff" strokeWidth="1.500" />
        </Svg>
      </span>
      <span className="flex w-[30px] justify-center">
        <Svg size="size-5">
          <path d="M12 1C7 1 6 5 6 9C4 12 3 15 4 18H20C21 15 20 12 18 9C18 5 17 1 12 1Z" fill="#111" />
          <ellipse cx="12" cy="16" rx="5.500" ry="6" fill="#fff" />
          <path d="M6 11H18L17 14H7Z" fill="#d8302c" />
          <circle cx="10" cy="6" r="1.500" fill="#fff" />
          <circle cx="14" cy="6" r="1.500" fill="#fff" />
          <path d="M5 22H11M13 22H19M9 9H15" stroke="#f0a020" strokeWidth="2" />
        </Svg>
      </span>
      <span className="flex w-[30px] justify-center">
        <Svg size="size-5">
          <path d="M2 1H22V17H2Z" fill="#97979c" />
          <path d="M1 19H11V23H1ZM13 19H23V23H13Z" fill="#c4c4c8" />
        </Svg>
      </span>
      <span className="flex w-[30px] justify-center">
        <Svg size="size-5">
          <path d="M2 2H22V22H2Z" fill="#222" stroke="#fff" strokeWidth="2" />
          <circle cx="12" cy="12" r="7" fill="#eee" />
          <circle cx="12" cy="7" r="1.500" fill="#222" />
          <circle cx="12" cy="17" r="1.500" fill="#222" />
          <circle cx="7" cy="12" r="1.500" fill="#222" />
          <circle cx="17" cy="12" r="1.500" fill="#222" />
          <circle cx="12" cy="12" r="2" fill="#222" />
          <path d="M4 4L8 8M20 4L16 8M4 20L8 16M20 20L16 16" stroke="#eee" strokeWidth="2" />
        </Svg>
      </span>
      <span className="flex w-[30px] justify-center pr-[6px]">
        <Svg size="size-5">
          <path d="M17 1V23L3 14V10Z" fill="#c4553c" />
          <path d="M17 1V23L12 12Z" fill="#eb9678" />
        </Svg>
      </span>
      <span className="flex w-[30px] justify-center">
        <Svg size="size-5">
          <path d="M6 8H21V19H6Z" fill="#fff" />
          <path d="M21 11H23V16H21M2 5V9H7V5M4 9V14H6M3 3V5M6 3V5" stroke="#fff" strokeWidth="1.500" />
        </Svg>
      </span>
      <span className="flex w-[30px] justify-center">
        <Svg size="size-5">
          <path d="M8 4H23V17H6V9M14 17V22M9 22H19M1 2H6V7H1ZM3 7V12" stroke="#fff" strokeWidth="1.500" />
        </Svg>
      </span>
      <span className="flex w-[30px] justify-center">
        <Svg size="size-5">
          <path d="M1 9H4L9 4V20L4 15H1Z" stroke="#fff" strokeWidth="1.500" />
          <path d="M12 9C13 11 13 13 12 15" stroke="#fff" strokeWidth="1.500" />
          <path d="M15 6C18 10 18 14 15 18M19 4C22 9 22 15 19 20" stroke="#8b99a8" strokeWidth="1.500" />
        </Svg>
      </span>
      <span className="w-[30px] text-center font-['Noto_Sans_CJK_SC',sans-serif] text-base leading-5">中</span>
      <span className="flex w-[38px] justify-center">
        <Svg size="size-5">
          <path d="M2 3L21 1L23 20L5 23Z" fill="#e0552c" />
          <path d="M18 7C12 4 7 6 7 9C7 13 18 11 18 15C18 19 10 19 6 16" stroke="#fff" strokeWidth="3" />
        </Svg>
      </span>
    </div>
  );
}

function Taskbar() {
  return (
    <footer className="flex h-[50px] shrink-0 overflow-hidden bg-[#0a2540] font-['Open_Sans','Noto_Sans_CJK_SC',sans-serif] text-white">
      <button aria-label="Cortana" className="w-[25px] self-center">
        <Svg size="size-5">
          <circle cx="-6" cy="12" r="9" stroke="#fff" strokeWidth="2" />
        </Svg>
      </button>
      {taskButtons.map((item) => (
        <button
          key={item.name}
          aria-label={item.name}
          className={`flex w-[62px] flex-col items-center ${item.active ? "bg-[#07508f]" : ""}`}
        >
          <span
            className={`flex w-[51px] flex-1 items-center justify-center ${
              item.progress ? "bg-[linear-gradient(90deg,#2f7048_70%,#2b3e54_70%)]" : ""
            }`}
          >
            {item.icon}
          </span>
          {item.active && <span className="h-[3px] w-full bg-[#8cc4f4]" />}
          {item.open && <span className="h-[3px] w-[51px] bg-[#8ab4dc]" />}
          {item.progress && <span className="h-[3px] w-[51px] bg-[#4ccc3c]" />}
        </button>
      ))}
      <div className="ml-auto flex items-center">
        <TrayIcons />
        <div className="h-full w-[68px] overflow-hidden pt-px pl-[13px] text-[15px] leading-6 whitespace-nowrap">
          <p className="pl-[17px]">18:54</p>
          <p>2021/3/</p>
        </div>
      </div>
    </footer>
  );
}

const menus = ["输入(I)", "视角(P)", "显示画面(D)", "建模(D)", "工具(T)", "显示(V)", "选项(O)", "说明(H)"];

function StatusBar() {
  const cell = "h-7 border-t-2 border-l-2 border-r border-t-[#a8a7ab] border-l-[#a8a7ab] border-r-white";
  return (
    <div className="flex h-8 shrink-0 items-end overflow-hidden bg-[#f0eef1] pl-[661px] text-xs whitespace-pre">
      <span className={`flex w-[22px] items-center justify-center ${cell}`}>
        <Svg size="size-5">
          <circle cx="12" cy="12" r="11" fill="#2f74e0" />
          <path d="M13 5V8M12 10L10 19H13" stroke="#fff" strokeWidth="2.500" />
        </Svg>
      </span>
      <span className={`ml-1 flex-1 ${cell}`} />
      <span className={`ml-1 w-[101px] pr-4 text-right leading-6 ${cell}`}>1 msec</span>
      <span className={`ml-1 w-[177px] pl-[15px] leading-6 ${cell}`}>DEFORM-3D  -  Pre-pr</span>
    </div>
  );
}

export default function App() {
  return (
    <div className={`relative flex h-screen w-full flex-col overflow-hidden bg-white text-[13px] text-[#1c1c1c] ${mono}`}>
      <div className="flex h-[29px] shrink-0 items-start justify-between font-['Open_Sans',sans-serif] text-base leading-5 text-[#8b8b8b]">
        <span>I-3D Pre Ver 11.0 - [2020-1-9]</span>
        <button aria-label="minimize" className="mt-[10px] mr-[45px] h-px w-3 bg-[#8b8b8b]" />
      </div>

      <nav className="flex h-[25px] shrink-0 items-center gap-[13px] border-t border-b border-t-[#ccd6cc] border-b-[#98979b] bg-[#f0eef1] pb-[2px]">
        {menus.map((menu, i) => (
          <button key={menu} className={`whitespace-nowrap ${i === 0 ? "-ml-1" : ""}`}>
            {menu}
          </button>
        ))}
      </nav>

      <Toolbar />

      <div className="flex min-h-0 flex-1 bg-[#f0eef1]">
        <Viewport />
        <ObjectPanel />
      </div>

      <StatusBar />
      <Taskbar />

      <FunctionDialog />

      {/* recording timer floating over the window edge */}
      <div className="absolute right-[-20px] bottom-[61px] flex size-[50px] items-center overflow-hidden rounded-full border-2 border-white bg-[linear-gradient(165deg,#3f8ae8_35%,#7cc8f0_36%)] pl-[5px] font-['Open_Sans',sans-serif] text-sm text-white">
        03:2
      </div>

      {/* mouse pointer */}
      <svg className="pointer-events-none absolute top-[486px] left-[692px] h-[26px] w-4" viewBox="0 0 16 26">
        <path d="M1 1V20L5 16L9 24L12 23L9 15H15Z" fill="#fff" stroke="#111" />
      </svg>
    </div>
  );
}
